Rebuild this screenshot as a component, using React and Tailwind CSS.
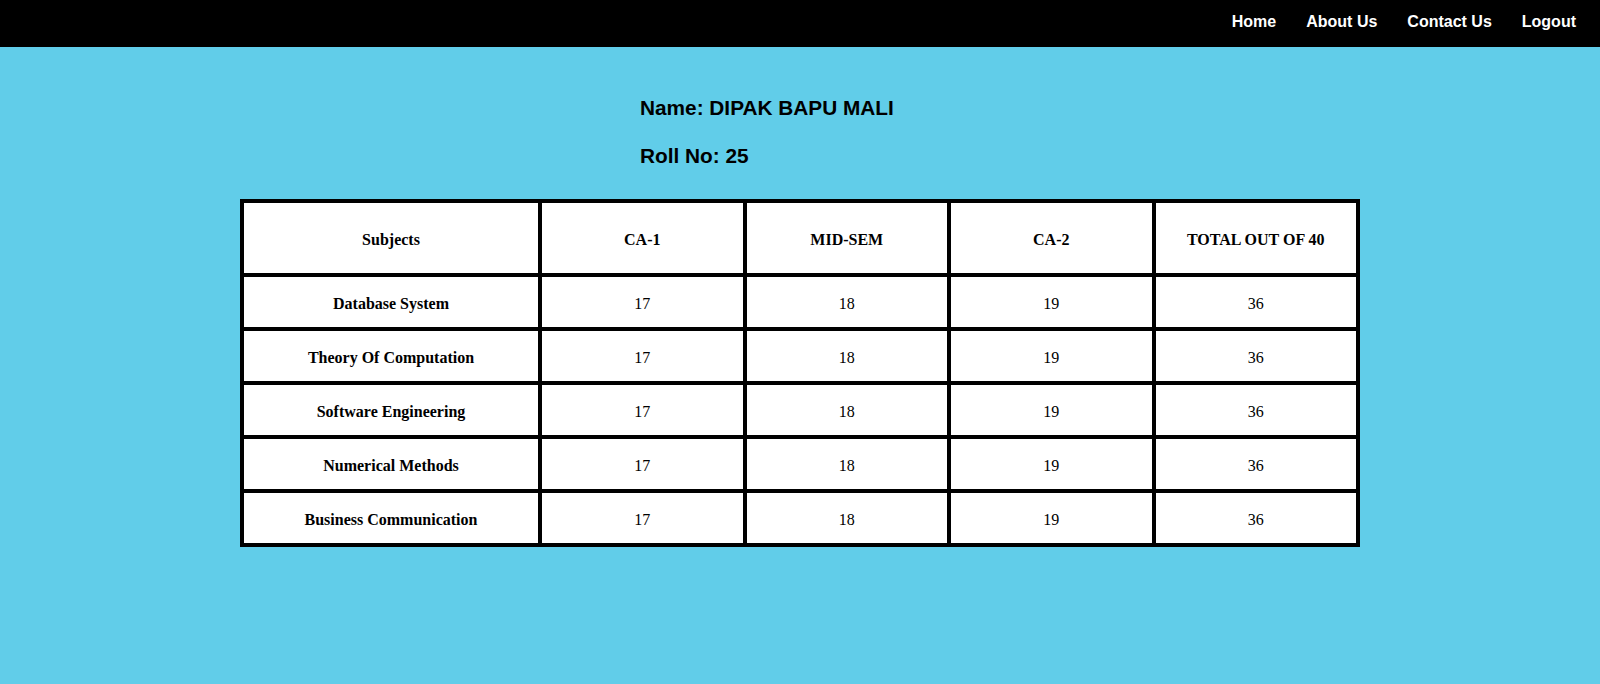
import React from 'react';

const subjects = [
  'Database System',
  'Theory Of Computation',
  'Software Engineering',
  'Numerical Methods',
  'Business Communication',
];

const App = () => {
  return (
    <div className="min-h-screen bg-[#61cde9]">
      {/* Navbar */}
      <nav className="h-[47px] bg-black flex items-center justify-end gap-[30px] pr-[24px] pb-1 font-['Liberation_Sans',Arial,sans-serif]">
        {['Home', 'About Us', 'Contact Us', 'Logout'].map((item) => (
          <a key={item} href="#" className="text-white font-bold text-[16px] leading-[18px]">
            {item}
          </a>
        ))}
      </nav>

      {/* Student info */}
      <div className="pl-[640px] pt-[49px] font-['Liberation_Sans',Arial,sans-serif] font-bold text-black text-[20.8px] leading-[24px]">
        <p>Name: DIPAK BAPU MALI</p>
        <p className="mt-[24px]">Roll No: 25</p>
      </div>

      {/* Marks table */}
      <table className="mt-[31px] mx-auto w-[70%] table-fixed border-collapse bg-white text-black font-['Liberation_Serif','Times_New_Roman',serif] text-[16px]">
        <thead>
          <tr>
            <th className="w-[298px] border-[4px] border-black pt-[28px] pb-[24px] leading-[18px]">Subjects</th>
            <th className="border-[4px] border-black pt-[28px] pb-[24px] leading-[18px]">CA-1</th>
            <th className="border-[4px] border-black pt-[28px] pb-[24px] leading-[18px]">MID-SEM</th>
            <th className="border-[4px] border-black pt-[28px] pb-[24px] leading-[18px]">CA-2</th>
            <th className="border-[4px] border-black pt-[28px] pb-[24px] leading-[18px]">TOTAL OUT OF 40</th>
          </tr>
        </thead>
        <tbody>
          {subjects.map((name) => (
            <tr key={name}>
              <td className="border-[4px] border-black pt-[18px] pb-[14px] leading-[18px] text-center font-bold">{name}</td>
              <td className="border-[4px] border-black pt-[18px] pb-[14px] leading-[18px] text-center">17</td>
              <td className="border-[4px] border-black pt-[18px] pb-[14px] leading-[18px] text-center">18</td>
              <td className="border-[4px] border-black pt-[18px] pb-[14px] leading-[18px] text-center">19</td>
              <td className="border-[4px] border-black pt-[18px] pb-[14px] leading-[18px] text-center">36</td>
            </tr>
          ))}
        </tbody>
      </table>
    </div>
  );
};

export default App;
